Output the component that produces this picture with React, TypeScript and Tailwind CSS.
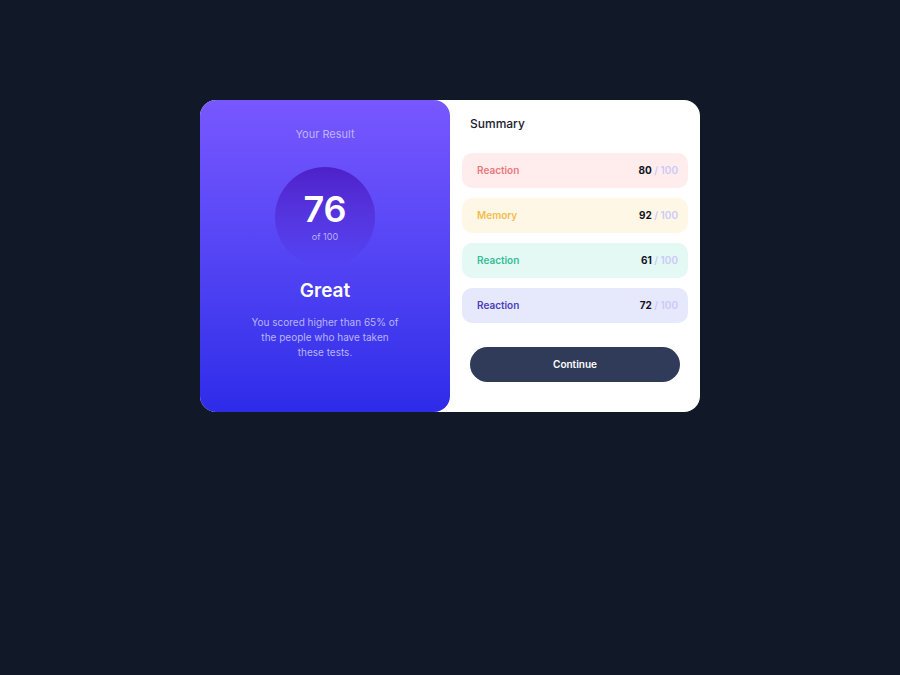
const results = [
  { label: "Reaction", score: 80, row: "bg-[#ffeded]", text: "text-[#e8787c]" },
  { label: "Memory", score: 92, row: "bg-[#fff7e6]", text: "text-[#f2bd4b]" },
  { label: "Reaction", score: 61, row: "bg-[#e4f8f4]", text: "text-[#36bd98]" },
  { label: "Reaction", score: 72, row: "bg-[#e6e8fc]", text: "text-[#4b3dba]" },
];

function ResultPanel() {
  return (
    <section className="flex flex-col items-center rounded-2xl bg-linear-to-b from-[#7857ff] to-[#2e2be9] px-12 pt-6 pb-12 text-center">
      <h2 className="text-[11px] leading-5 text-[#bfb5ff]">Your Result</h2>

      <div className="mt-[23px] flex size-[100px] flex-col items-center justify-center rounded-full bg-linear-to-b from-[#4d21c9] to-[#2421c9]/0">
        <p className="text-4xl leading-9 font-semibold text-white">76</p>
        <p className="mt-1 text-[9px] leading-3 text-[#bcb2f7]">of 100</p>
      </div>

      <h3 className="mt-2.5 text-[19px] leading-7 font-semibold text-white">Great</h3>
      <p className="mt-2.5 text-[10px] leading-[15px] text-[#b9b5fa]">
        You scored higher than 65% of the people who have taken these tests.
      </p>
    </section>
  );
}

function SummaryPanel() {
  return (
    <section className="flex flex-col px-3 pt-[14px] pb-[30px]">
      <h2 className="px-2 text-xs leading-5 font-medium text-[#1b2030]">Summary</h2>

      <ul className="mt-[19px] flex flex-col gap-2.5">
        {results.map((item, i) => (
          <li
            key={i}
            className={`flex h-[35px] items-center justify-between rounded-[10px] pr-2.5 pl-[15px] text-[10px] font-semibold ${item.row}`}
          >
            <span className={item.text}>{item.label}</span>
            <span className="text-[#cdc9f7]">
              <span className="font-bold text-[#10131c]">{item.score}</span> / 100
            </span>
          </li>
        ))}
      </ul>

      <button className="mx-2 mt-6 h-[35px] cursor-pointer rounded-full bg-[#303b59] text-[10px] font-semibold text-white">
        Continue
      </button>
    </section>
  );
}

export default function App() {
  return (
    <div className="min-h-screen bg-[#111827] px-4 pt-[100px] font-['Inter',sans-serif]">
      <main className="mx-auto grid max-w-[500px] grid-cols-2 rounded-2xl bg-white">
        <ResultPanel />
        <SummaryPanel />
      </main>
    </div>
  );
}
